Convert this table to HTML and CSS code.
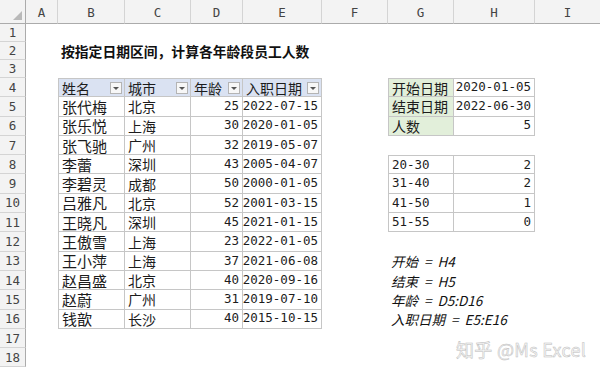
FILE: index.html
```html
<!DOCTYPE html>
<html lang="zh">
<head>
<meta charset="utf-8">
<title>按指定日期区间，计算各年龄段员工人数</title>
<link rel="stylesheet" href="styles.css">
</head>
<body>
<div class="sheet">
  <div class="corner"><span class="tri"></span></div>
  <div class="ch">A</div><div class="ch">B</div><div class="ch">C</div><div class="ch">D</div><div class="ch">E</div><div class="ch">F</div><div class="ch">G</div><div class="ch">H</div><div class="ch last">I</div>

  <div class="rh r1">1</div><div class="rh r2">2</div><div class="rh r3">3</div><div class="rh r4">4</div><div class="rh r5">5</div><div class="rh r6">6</div>
  <div class="rh r7">7</div><div class="rh r8">8</div><div class="rh r9">9</div><div class="rh r10">10</div><div class="rh r11">11</div><div class="rh r12">12</div>
  <div class="rh r13">13</div><div class="rh r14">14</div><div class="rh r15">15</div><div class="rh r16">16</div><div class="rh r17">17</div><div class="rh r18">18</div>

  <div class="title r2">按指定日期区间，计算各年龄段员工人数</div>

  <div class="c th zs tt tl r4 cB">姓名<span class="fb"></span></div>
  <div class="c th zs tt r4 cC">城市<span class="fb"></span></div>
  <div class="c th zs tt r4 cD">年龄<span class="fb"></span></div>
  <div class="c th zs tt r4 cE">入职日期<span class="fb"></span></div>

  <div class="c zh tl r5 cB">张代梅</div><div class="c zs r5 cC">北京</div><div class="c num r5 cD">25</div><div class="c num r5 cE">2022-07-15</div>
  <div class="c zh tl r6 cB">张乐悦</div><div class="c zs r6 cC">上海</div><div class="c num r6 cD">30</div><div class="c num r6 cE">2020-01-05</div>
  <div class="c zh tl r7 cB">张飞驰</div><div class="c zs r7 cC">广州</div><div class="c num r7 cD">32</div><div class="c num r7 cE">2019-05-07</div>
  <div class="c zh tl r8 cB">李蕾</div><div class="c zs r8 cC">深圳</div><div class="c num r8 cD">43</div><div class="c num r8 cE">2005-04-07</div>
  <div class="c zh tl r9 cB">李碧灵</div><div class="c zs r9 cC">成都</div><div class="c num r9 cD">50</div><div class="c num r9 cE">2000-01-05</div>
  <div class="c zh tl r10 cB">吕雅凡</div><div class="c zs r10 cC">北京</div><div class="c num r10 cD">52</div><div class="c num r10 cE">2001-03-15</div>
  <div class="c zh tl r11 cB">王晓凡</div><div class="c zs r11 cC">深圳</div><div class="c num r11 cD">45</div><div class="c num r11 cE">2021-01-15</div>
  <div class="c zh tl r12 cB">王傲雪</div><div class="c zs r12 cC">上海</div><div class="c num r12 cD">23</div><div class="c num r12 cE">2022-01-05</div>
  <div class="c zh tl r13 cB">王小萍</div><div class="c zs r13 cC">上海</div><div class="c num r13 cD">37</div><div class="c num r13 cE">2021-06-08</div>
  <div class="c zh tl r14 cB">赵昌盛</div><div class="c zs r14 cC">北京</div><div class="c num r14 cD">40</div><div class="c num r14 cE">2020-09-16</div>
  <div class="c zh tl r15 cB">赵蔚</div><div class="c zs r15 cC">广州</div><div class="c num r15 cD">31</div><div class="c num r15 cE">2019-07-10</div>
  <div class="c zh tl r16 cB">钱歆</div><div class="c zs r16 cC">长沙</div><div class="c num r16 cD">40</div><div class="c num r16 cE">2015-10-15</div>

  <div class="c zs green tt tl r4 cG">开始日期</div><div class="c num tt r4 cH">2020-01-05</div>
  <div class="c zs green tl r5 cG">结束日期</div><div class="c num r5 cH">2022-06-30</div>
  <div class="c zs green tl r6 cG">人数</div><div class="c num r6 cH">5</div>

  <div class="c mono tt tl r8 cG">20-30</div><div class="c num tt r8 cH">2</div>
  <div class="c mono tl r9 cG">31-40</div><div class="c num r9 cH">2</div>
  <div class="c mono tl r10 cG">41-50</div><div class="c num r10 cH">1</div>
  <div class="c mono tl r11 cG">51-55</div><div class="c num r11 cH">0</div>

  <div class="fx r13">开始 = H4</div>
  <div class="fx r14">结束 = H5</div>
  <div class="fx r15">年龄 = D5:D16</div>
  <div class="fx r16">入职日期 = E5:E16</div>

  <div class="watermark">知乎 @Ms Excel</div>
</div>
</body>
</html>
```
FILE: styles.css
```css
html, body {
  margin: 0;
  padding: 0;
  background: #ffffff;
  overflow: hidden;
}

.sheet {
  position: relative;
  width: 600px;
  height: 369px;
  overflow: hidden;
  display: grid;
  grid-template-columns: 26px 32px 67px 66px 52px 79px 66px 66px 81px 1fr;
  grid-template-rows: 24px 18px 18px 18px repeat(15, 19.3px);
  font-family: "DejaVu Sans Mono", "Noto Sans CJK SC", monospace;
  color: #1c1c1c;
}

/* headers */
.corner {
  grid-row: 1;
  grid-column: 1;
  background: #f3f3f3;
  border-right: 1px solid #ababab;
  border-bottom: 1px solid #ababab;
  display: flex;
  align-items: flex-end;
  justify-content: flex-end;
}
.tri {
  width: 9px;
  height: 9px;
  margin: 0 3px 3px 0;
  background: #b9b9b9;
  clip-path: polygon(100% 0, 100% 100%, 0 100%);
}
.ch {
  grid-row: 1;
  background: #f3f3f3;
  border-right: 1px solid #d4d4d4;
  border-bottom: 1px solid #ababab;
  display: flex;
  align-items: center;
  justify-content: center;
  font-size: 12.5px;
  color: #444;
  padding-top: 1px;
}
.ch.last { border-right: 0; }
.rh {
  grid-column: 1;
  background: #f3f3f3;
  border-right: 1px solid #ababab;
  border-bottom: 1px solid #d4d4d4;
  display: flex;
  align-items: center;
  justify-content: center;
  font-size: 12.5px;
  color: #444;
}

/* rows */
.r1 { grid-row: 2; }
.r2 { grid-row: 3; }
.r3 { grid-row: 4; }
.r4 { grid-row: 5; }
.r5 { grid-row: 6; }
.r6 { grid-row: 7; }
.r7 { grid-row: 8; }
.r8 { grid-row: 9; }
.r9 { grid-row: 10; }
.r10 { grid-row: 11; }
.r11 { grid-row: 12; }
.r12 { grid-row: 13; }
.r13 { grid-row: 14; }
.r14 { grid-row: 15; }
.r15 { grid-row: 16; }
.r16 { grid-row: 17; }
.r17 { grid-row: 18; }
.r18 { grid-row: 19; }

/* columns */
.cB { grid-column: 3; }
.cC { grid-column: 4; }
.cD { grid-column: 5; }
.cE { grid-column: 6; }
.cG { grid-column: 8; }
.cH { grid-column: 9; }

.title {
  grid-column: 3 / 9;
  display: flex;
  align-items: center;
  padding-left: 3px;
  font-family: "Noto Sans CJK SC", sans-serif;
  font-weight: bold;
  font-size: 13.8px;
  white-space: nowrap;
  color: #111;
}

/* cells */
.c {
  display: flex;
  align-items: center;
  padding: 0 3px;
  white-space: nowrap;
  overflow: hidden;
  border-right: 1px solid #c6c6c6;
  border-bottom: 1px solid #c6c6c6;
  line-height: 1;
}
.tl { border-left: 1px solid #c6c6c6; }
.tt { border-top: 1px solid #c6c6c6; }

.zh {
  font-family: "Noto Sans CJK SC", sans-serif;
  font-size: 15px;
}
.zs {
  font-family: "Noto Sans CJK SC", sans-serif;
  font-size: 14px;
}
.num {
  font-size: 12.5px;
  justify-content: flex-end;
  padding-right: 3px;
}
.mono {
  font-size: 12.5px;
}

.th {
  background: #dae2f2;
  padding-right: 2px;
}
.green {
  background: #e2efda;
}

.fb {
  margin-left: auto;
  flex: none;
  width: 12px;
  height: 12px;
  border: 1px solid #b4b4b4;
  background: #f7f7f7;
  box-sizing: border-box;
  display: flex;
  align-items: center;
  justify-content: center;
}
.fb::after {
  content: "";
  width: 0;
  height: 0;
  border-left: 3px solid transparent;
  border-right: 3px solid transparent;
  border-top: 3px solid #555;
  margin-top: 1px;
}

.fx {
  grid-column: 8 / 10;
  display: flex;
  align-items: center;
  padding-left: 3px;
  font-family: "Noto Sans CJK SC", sans-serif;
  font-style: italic;
  font-size: 13.5px;
  word-spacing: 3px;
  white-space: nowrap;
  color: #111;
}

.watermark {
  position: absolute;
  left: 456px;
  top: 336px;
  font-family: "Noto Sans CJK SC", sans-serif;
  font-size: 18px;
  color: #f8f8f8;
  -webkit-text-stroke: 0.5px #bdbdbd;
  white-space: nowrap;
  letter-spacing: 0.3px;
}
```
